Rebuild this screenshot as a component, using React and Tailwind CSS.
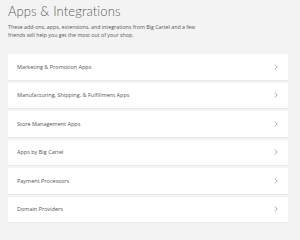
import React from "react";

const items = [
  "Marketing & Promotion Apps",
  "Manufacturing, Shipping, & Fulfillment Apps",
  "Store Management Apps",
  "Apps by Big Cartel",
  "Payment Processors",
  "Domain Providers",
];

function Chevron() {
  return (
    <svg width="4" height="6" viewBox="0 0 4 6" className="shrink-0">
      <path d="M0.8 0.6 L3.2 3 L0.8 5.4" fill="none" stroke="#8a8a8a" strokeWidth="0.7" />
    </svg>
  );
}

export default function App() {
  return (
    <div className="w-[300px] h-[240px] bg-[#f3f3f3] overflow-hidden" style={{ fontFamily: '"Open Sans", sans-serif' }}>
      <div className="pl-[8px] pr-[12px] pt-[4px]">
        <h1 className="text-[13px] leading-[14px] font-light text-[#5a5a5a] tracking-[0.1px]" style={{ fontFamily: 'Lato, "Open Sans", sans-serif' }}>
          Apps &amp; Integrations
        </h1>
        <p className="mt-[5px] text-[5.3px] leading-[8px] text-[#555] w-[200px]">
          These add-ons, apps, extensions, and integrations from Big Cartel and a few friends will help you get the most out of your shop.
        </p>
        <div className="mt-[15px] flex flex-col gap-[3px]">
          {items.map((t) => (
            <div
              key={t}
              className="h-[25.5px] bg-white flex items-center justify-between pl-[9px] pr-[10px] shadow-[0_1px_0_rgba(0,0,0,0.04)]"
            >
              <span className="text-[5.5px] text-[#555]">{t}</span>
              <Chevron />
            </div>
          ))}
        </div>
      </div>
    </div>
  );
}
